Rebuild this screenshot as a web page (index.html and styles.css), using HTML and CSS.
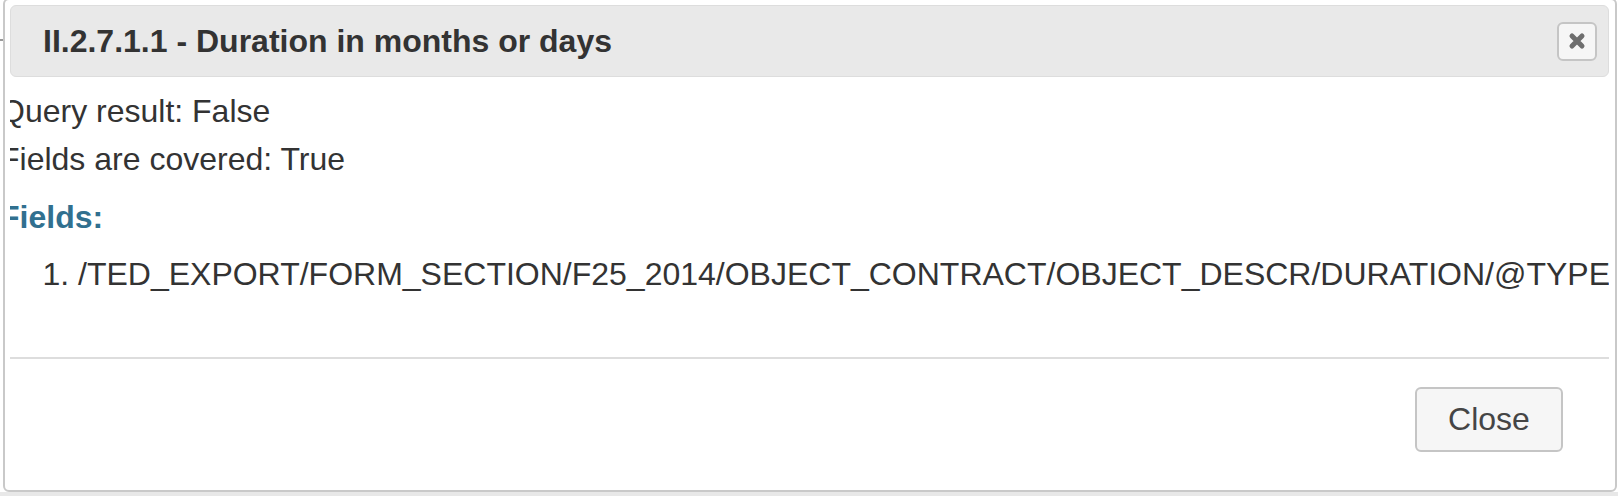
FILE: index.html
```html
<!DOCTYPE html>
<html>
<head>
<meta charset="utf-8">
<link rel="stylesheet" href="styles.css">
</head>
<body>
<div class="behind-mark"></div>
<div class="dialog">
  <div class="titlebar">
    <span class="title">II.2.7.1.1 - Duration in months or days</span>
    <button class="titlebar-close" aria-label="close">
      <svg width="18" height="18" viewBox="0 0 18 18"><path d="M4 4 L14 14 M14 4 L4 14" stroke="#6e6e6e" stroke-width="5" stroke-linecap="round"/></svg>
    </button>
  </div>
  <div class="content">
    <div class="scroller">
      <div class="line">Query result: False</div>
      <div class="line">Fields are covered: True</div>
      <div class="line fields-head">Fields:</div>
      <ol class="field-list">
        <li>/TED_EXPORT/FORM_SECTION/F25_2014/OBJECT_CONTRACT/OBJECT_DESCR/DURATION/@TYPE</li>
      </ol>
    </div>
  </div>
  <div class="buttonpane">
    <button class="btn">Close</button>
  </div>
</div>
<div class="page-below"></div>
</body>
</html>
```
FILE: styles.css
```css
html, body {
  margin: 0;
  padding: 0;
  background: #ffffff;
  overflow: hidden;
}
body {
  width: 1618px;
  height: 496px;
  position: relative;
  font-family: "Liberation Sans", Arial, sans-serif;
  color: #333333;
}
.behind-mark {
  position: absolute;
  left: 0;
  top: 39px;
  width: 3px;
  height: 2px;
  background: #9a9a9a;
}
.dialog {
  margin: -2px 0 0 3px;
  width: 1614px;
  box-sizing: border-box;
  border: 2px solid #c9c9c9;
  border-radius: 6px;
  padding: 5px 6px 0 5px;
  background: #ffffff;
}
.page-below {
  height: 10px;
  background: #e8e8e8;
}
.titlebar {
  height: 72px;
  box-sizing: border-box;
  background: #e9e9e9;
  border: 1px solid #dddddd;
  border-radius: 6px;
  display: flex;
  align-items: center;
  justify-content: space-between;
  padding: 0 11px 0 32px;
}
.title {
  font-weight: bold;
  font-size: 32px;
  color: #333333;
}
.titlebar-close {
  width: 40px;
  height: 39px;
  box-sizing: border-box;
  background: #f6f6f6;
  border: 2px solid #c5c5c5;
  border-radius: 6px;
  padding: 0;
  display: flex;
  align-items: center;
  justify-content: center;
}
.content {
  overflow: hidden;
  padding: 10px 0 59px 0;
}
.scroller {
  margin-left: -10px;
  white-space: nowrap;
}
.line {
  font-size: 32px;
  line-height: 48px;
  height: 48px;
}
.fields-head {
  font-weight: bold;
  color: #31708f;
  margin-top: 10px;
}
.field-list {
  margin: 9px 0 0 0;
  padding: 0 0 0 78px;
  font-size: 32px;
  line-height: 48px;
}
.buttonpane {
  border-top: 2px solid #dddddd;
  padding: 28px 46px 38px 0;
  display: flex;
  justify-content: flex-end;
}
.btn {
  width: 148px;
  height: 65px;
  box-sizing: border-box;
  background: #f6f6f6;
  border: 2px solid #c5c5c5;
  border-radius: 6px;
  font-family: "Liberation Sans", Arial, sans-serif;
  font-size: 32px;
  color: #454545;
  padding: 0;
}
```
